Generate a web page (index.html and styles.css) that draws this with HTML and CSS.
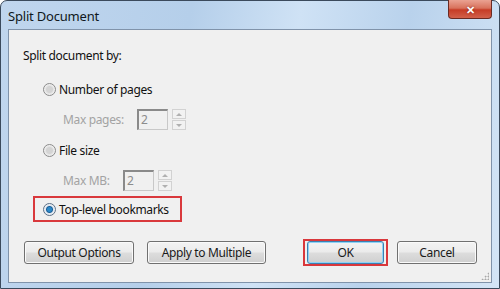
FILE: index.html
```html
<!DOCTYPE html>
<html>
<head>
<meta charset="utf-8">
<link rel="stylesheet" href="styles.css">
</head>
<body>
<div class="window">
  <div class="titlebar">
    <span class="title">Split Document</span>
    <span class="close">&#x2715;</span>
  </div>
  <div class="client">
    <div class="row label-row">Split document by:</div>
    <div class="row radio-row r1"><span class="radio"></span><span class="rtext">Number of pages</span></div>
    <div class="row field-row f1"><span class="flabel w-pages">Max pages:</span><span class="input">2</span><span class="spin"><span class="up"></span><span class="down"></span></span></div>
    <div class="row radio-row r2"><span class="radio"></span><span class="rtext">File size</span></div>
    <div class="row field-row f2"><span class="flabel w-mb">Max MB:</span><span class="input">2</span><span class="spin"><span class="up"></span><span class="down"></span></span></div>
    <div class="row hl-box"><span class="radio checked"></span><span class="rtext">Top-level bookmarks</span></div>
    <div class="row buttons">
      <span class="btn b-output">Output Options</span>
      <span class="btn b-apply">Apply to Multiple</span>
      <span class="spacer"></span>
      <span class="hl-ok"><span class="btn b-ok">OK</span></span>
      <span class="btn b-cancel">Cancel</span>
    </div>
    <span class="grip"></span>
  </div>
</div>
</body>
</html>
```
FILE: styles.css
```css
* { box-sizing: border-box; }
html, body { margin: 0; padding: 0; background: #ffffff; }
body { width: 500px; height: 289px; overflow: hidden; font-family: "Noto Sans", "Open Sans", sans-serif; font-size: 12px; letter-spacing: -0.35px; color: #111; }

.window {
  width: 500px; height: 289px;
  display: flex; flex-direction: column;
  border: 1px solid #3b4a5c;
  border-radius: 7px 7px 0 0;
  background: linear-gradient(100deg, #c0d6ee 0%, #b5cfea 35%, #cfe2f5 55%, #b9d2ec 75%, #d4e5f6 100%);
  padding: 0 7px 5px 7px;
}
.titlebar {
  height: 28px; flex: none;
  display: flex; align-items: flex-start; justify-content: space-between;
}
.title { margin-top: 6px; font-size: 13px; color: #101820; letter-spacing: -0.2px; }
.close {
  width: 44px; height: 19px; margin-top: -1px;
  display: flex; align-items: center; justify-content: center;
  border: 1px solid #6b2a22; border-top: none;
  border-radius: 0 0 4px 4px;
  background: linear-gradient(#eaa292 0%, #d8725c 45%, #c63c26 55%, #d2604a 100%);
  color: #fff; font-weight: bold; font-size: 11px; letter-spacing: 0;
  text-shadow: 0 0 2px #7a1a10;
}
.client {
  position: relative;
  flex: 1;
  background: #f0f0f0;
  border: 1px solid #8093aa;
  padding: 17px 14px 0 0;
  display: flex; flex-direction: column;
}
.row { display: flex; align-items: center; flex: none; }
.label-row { height: 16px; padding-left: 14px; }
.radio-row { height: 16px; padding-left: 34px; }
.r1 { margin-top: 18px; }
.r2 { margin-top: 12px; }
.field-row { height: 21px; padding-left: 54px; }
.f1 { margin-top: 12px; }
.f2 { margin-top: 12px; }

.radio {
  width: 13px; height: 13px; border-radius: 50%;
  border: 1px solid #8a8a8a;
  background: radial-gradient(circle at 50% 50%, #d4d4d4 0 3px, #e4e4e4 4px, #f6f6f6 6px);
  flex: none;
}
.radio.checked {
  border-color: #5c6f86;
  background: radial-gradient(circle at 50% 50%, #2a89c8 0 2px, #1a5e98 3px, #dfe6ee 4px, #f4f6f8 6px);
}
.rtext { margin-left: 3px; }

.flabel { color: #a3a3a3; }
.w-pages { width: 74px; }
.w-mb { width: 60px; }
.input {
  width: 31px; height: 21px;
  border: 1px solid #c8c8c8;
  border-top-color: #8a8a8a; border-left-color: #8a8a8a;
  border-top-width: 2px; border-left-width: 2px;
  background: #f0f0f0; color: #8c8c8c;
  padding-left: 2px; line-height: 17px;
}
.spin {
  margin-left: 4px; width: 14px; height: 21px;
  display: flex; flex-direction: column; gap: 1px;
}
.spin .up, .spin .down {
  flex: 1; border: 1px solid #d2d2d2; background: #f2f2f2; position: relative;
}
.spin .up::after, .spin .down::after {
  content: ""; position: absolute; left: 3px; top: 3px;
  border-left: 3px solid transparent; border-right: 3px solid transparent;
}
.spin .up::after { border-bottom: 3px solid #b0b0b0; }
.spin .down::after { border-top: 3px solid #b0b0b0; }

.hl-box {
  margin-top: 5px; margin-left: 24px;
  width: 149px; height: 26px;
  border: 2px solid #d9383c;
  padding-left: 8px; padding-top: 1px;
}

.buttons {
  margin-top: 17px; height: 27px;
  padding-left: 15px;
}
.spacer { flex: 1; }
.btn {
  height: 23px;
  display: inline-flex; align-items: center; justify-content: center;
  border: 1px solid #707070; border-radius: 3px;
  background: linear-gradient(#f3f3f3 0%, #ebebeb 48%, #dddddd 52%, #cfcfcf 100%);
  box-shadow: inset 0 0 0 1px #fafafa;
  color: #1a1a1a;
}
.b-output { width: 110px; }
.b-apply { width: 119px; margin-left: 13px; }
.hl-ok {
  border: 2px solid #d9383c; padding: 0 2px; height: 27px;
  display: inline-flex; align-items: center;
}
.b-ok { width: 77px; border-color: #3c7fb1; box-shadow: inset 0 0 0 1px #8fd2f5; }
.b-cancel { width: 80px; margin-left: 9px; }

.grip {
  position: absolute; right: 2px; bottom: 2px; width: 8px; height: 8px;
  background-image: radial-gradient(circle, #a8a8a8 0.8px, transparent 1.2px);
  background-size: 3px 3px;
  clip-path: polygon(100% 0, 100% 100%, 0 100%);
}
```
